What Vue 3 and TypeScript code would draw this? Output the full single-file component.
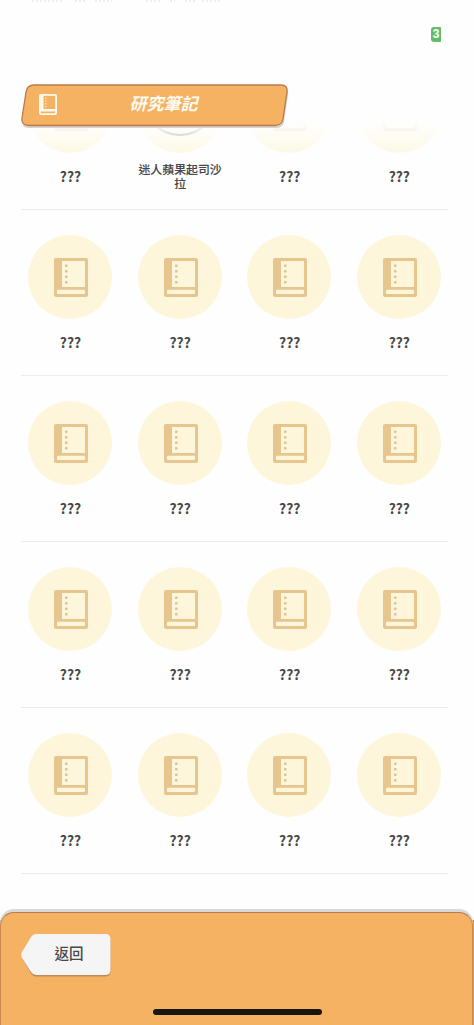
<script setup lang="ts">
interface Note {
  name: string
  found?: boolean
}

const unknown = (): Note => ({ name: '???' })
const rows: Note[][] = Array.from({ length: 5 }, () => Array.from({ length: 4 }, unknown))
rows[0][1] = { name: '迷人蘋果起司沙拉', found: true }

const holes: number[] = [7.7, 13.3, 18.8, 24.3]
</script>

<template>
  <div class="screen">
    <div class="status">
      <svg class="cut" width="200" height="4" viewBox="0 0 200 4" aria-hidden="true">
        <path d="M2 1h30M45 1h11M65 1h17M116 1h16M140 1h5M155 1h12M172 1h20" />
      </svg>
      <span class="battery">3</span>
    </div>

    <main class="list">
      <section v-for="(row, r) in rows" :key="r" class="row">
        <article v-for="(note, c) in row" :key="c" class="note">
          <div class="disc">
            <div v-if="note.found" class="plate"></div>
            <svg v-else class="book" viewBox="0 0 34 39">
              <rect width="34" height="39" rx="2" fill="#e6c58f" />
              <path d="M8 3H31V29H8Z" fill="#fdf6da" />
              <rect x="3" y="31.800" width="28" height="4.200" rx="1" fill="#fdf6da" />
              <rect v-for="y in holes" :key="y" x="11" :y="y - 1.200" width="2.500" height="2.500" rx="0.700" fill="#dcc29a" />
            </svg>
          </div>
          <p class="name" :class="{ found: note.found }">{{ note.name }}</p>
        </article>
      </section>
    </main>

    <div class="fade"></div>

    <header class="banner">
      <svg class="banner-bg" viewBox="0 0 270 48" aria-hidden="true">
        <path d="M13 4H261Q268 4 267 11L263 38Q262 44 255 44H8Q1 44 2 38L6 11Q7 4 13 4Z" fill="#d8d4d2" />
        <path d="M13 1H260Q267 1 266 8L262 35Q261 41.500 254 41.500H8Q0 41.500 1 34L5 8Q6 1 13 1Z" fill="#f4b262" stroke="#b97b4d" stroke-width="1.300" />
      </svg>
      <svg class="banner-icon" viewBox="0 0 18 21">
        <rect x="0.900" y="0.900" width="16.200" height="19.200" rx="1" fill="none" stroke="#fffaf0" stroke-width="1.800" />
        <path d="M1 1H4.500V16H1ZM1 15H17V17.500H1Z" fill="#fffaf0" />
        <path d="M6.700 3.500V14" stroke="#fbe3c1" stroke-width="1.400" stroke-dasharray="1.500 1.300" />
      </svg>
      <h1 class="title">研究筆記</h1>
    </header>

    <footer class="footer">
      <div class="panel">
        <button class="back" type="button">
          <svg class="back-bg" viewBox="0 0 90 46" aria-hidden="true">
            <path d="M14 3H84Q89.500 3 89.500 8V38Q89.500 43.500 84 43.500H15Q12 43.500 10 40.500L1.500 26Q0 23 1.500 20L9 8Q11 3 14 3Z" fill="#b88b5c" />
            <path d="M15 1H84Q89.500 1 89.500 6V36.500Q89.500 42 84 42H15Q12 42 10 39L1 25Q-0.500 22 1 19L10 4Q12 1 15 1Z" fill="#f5f5f5" />
          </svg>
          <span class="back-label">返回</span>
        </button>
        <div class="home"></div>
      </div>
    </footer>
  </div>
</template>

<style>
body {
  margin: 0;
  background: #fefefe;
}
</style>

<style scoped>
.screen {
  position: relative;
  width: 474px;
  height: 1025px;
  overflow: hidden;
  display: flex;
  flex-direction: column;
  background: #fefefe;
  color: #484848;
  font-family: "Noto Sans CJK TC", sans-serif;
}
.status {
  height: 44px;
  flex: none;
  display: flex;
  justify-content: space-between;
  padding: 0 33px 0 30px;
}
.cut {
  fill: none;
  stroke: #eeeeee;
  stroke-width: 2;
  stroke-dasharray: 2 2;
}
.battery {
  width: 10px;
  height: 15px;
  margin-top: 27px;
  border-radius: 3px 1px 1px 3px;
  background: #62bd68;
  color: #fff;
  font: 700 12px/15px "Liberation Sans", sans-serif;
  text-align: center;
}
.list {
  flex: 1;
  padding: 0 26px 0 21px;
}
.row {
  box-sizing: border-box;
  height: 166px;
  padding: 25px 0 0 7px;
  border-bottom: 1.500px solid #ececec;
  display: grid;
  grid-template-columns: repeat(4, 84px);
  column-gap: 25.600px;
}
.note {
  display: flex;
  flex-direction: column;
  align-items: center;
}
.disc {
  width: 84px;
  height: 84px;
  flex: none;
  border-radius: 50%;
  background: #fdf6da;
  display: flex;
  align-items: center;
  justify-content: center;
}
.book {
  width: 34px;
  height: 39px;
  margin-left: 2px;
}
.plate {
  box-sizing: border-box;
  flex: none;
  width: 74px;
  height: 74px;
  margin-bottom: 25px;
  border: 2px solid #83767e;
  border-radius: 50%;
}
.name {
  width: 84px;
  height: 28px;
  margin: 9px 0 0;
  padding-left: 1px;
  display: flex;
  align-items: center;
  justify-content: center;
  text-align: center;
  font-size: 13.800px;
  font-weight: 700;
  line-height: 14px;
}
.name.found {
  font-size: 11.900px;
  font-weight: 500;
  -webkit-text-stroke: 0.100px #484848;
}
.fade {
  position: absolute;
  top: 60px;
  left: 0;
  width: 474px;
  height: 100px;
  background: linear-gradient(#fefefe 62%, rgba(254, 254, 254, 0.850) 70%, rgba(254, 254, 254, 0.350) 92%, rgba(254, 254, 254, 0.150));
}
.banner {
  position: absolute;
  top: 84px;
  left: 20.500px;
  width: 270px;
  height: 42px;
  display: flex;
  align-items: center;
}
.banner-bg {
  position: absolute;
  top: 0;
  left: 0;
  width: 270px;
  height: 48px;
}
.banner-icon {
  position: relative;
  width: 18px;
  height: 21px;
  margin-left: 18.500px;
  margin-top: -2px;
}
.title {
  position: relative;
  margin: -4px 0 0 72.500px;
  color: #fffaf0;
  font-size: 17px;
  font-weight: 700;
  font-style: italic;
  line-height: 24px;
}
.footer {
  position: absolute;
  left: 0;
  bottom: 0;
  width: 474px;
  height: 113px;
  background: linear-gradient(transparent 8px, #b97b4d 8px, #b97b4d 10px, #dc9556 10px);
}
.panel {
  box-sizing: border-box;
  height: 113px;
  margin-right: 1px;
  padding: 20px 19px 20px 20px;
  border: 1px solid #c98a54;
  border-top-color: #b97b4d;
  border-bottom: 0;
  border-radius: 14px 14px 0 0;
  background: #f4b262;
  box-shadow: 0 -3px 0 #d9d9d9;
}
.back {
  position: relative;
  display: flex;
  align-items: center;
  justify-content: center;
  width: 90px;
  height: 43px;
  padding: 0 0 3px 6px;
  border: 0;
  background: none;
  color: #484848;
  font: 500 14.500px/20px "Noto Sans CJK TC", sans-serif;
}
.back-bg {
  position: absolute;
  top: 0;
  left: 0;
  width: 90px;
  height: 46px;
}
.back-label {
  position: relative;
}
.home {
  width: 169px;
  height: 6px;
  margin: 33px auto 0;
  border-radius: 3px;
  background: #17170f;
}
</style>
